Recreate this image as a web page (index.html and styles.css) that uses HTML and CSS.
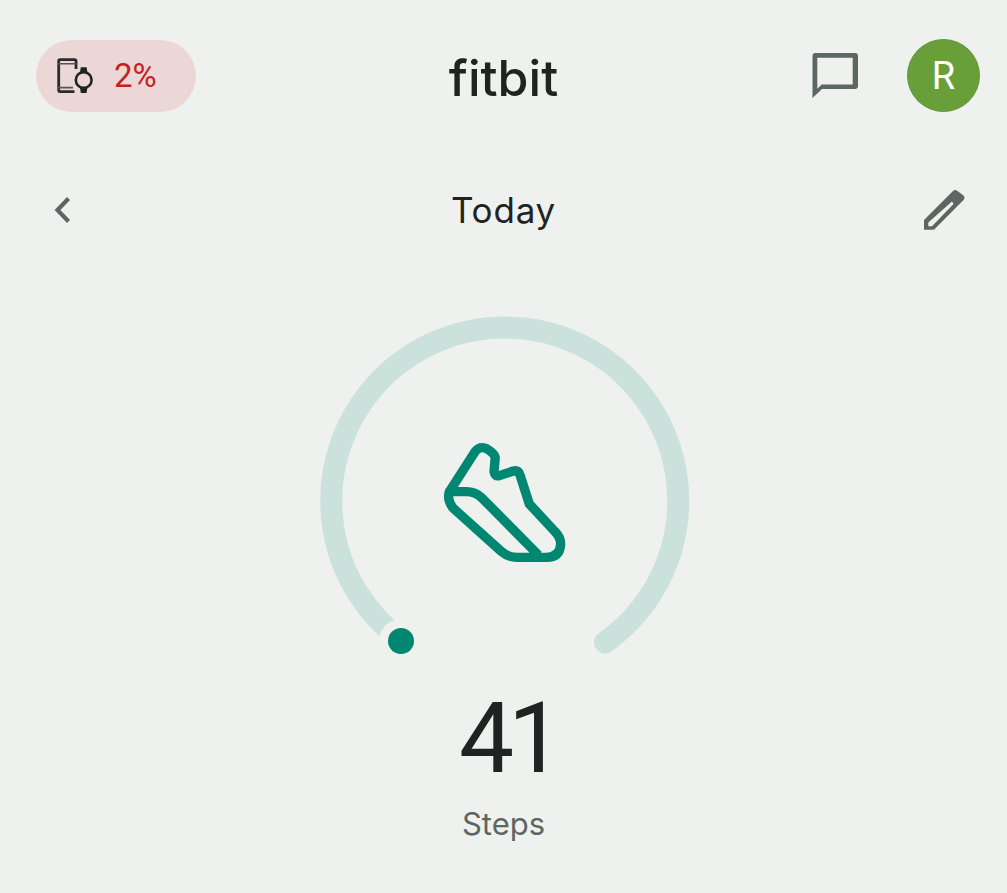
FILE: index.html
```html
<!DOCTYPE html>
<html lang="en">
<head>
<meta charset="utf-8">
<title>fitbit</title>
<link rel="stylesheet" href="styles.css">
</head>
<body>
<header class="topbar">
  <div class="battery">
    <svg class="battery-icon" viewBox="0 0 38 37" width="38" height="37" aria-hidden="true">
      <path d="M18.500 34.600H4Q2.700 34.600 2.700 33V4Q2.700 2.700 4 2.700H18.500Q20 2.700 20 4V12" fill="none" stroke="#2b2b2b" stroke-width="2.800"/>
      <path d="M2 6.800H20M2 30.600H17" fill="none" stroke="#555" stroke-width="1.600"/>
      <circle cx="27.700" cy="23" r="7.900" fill="none" stroke="#222" stroke-width="2.600"/>
      <path d="M24 15.500L24.800 10.300H30.600L31.400 15.500ZM24 30.500L24.800 36H30.600L31.400 30.500Z" fill="#222"/>
    </svg>
    <span class="battery-value">2%</span>
  </div>
  <div class="logo">fitbit</div>
  <div class="top-actions">
    <svg class="message-icon" viewBox="0 0 48 48" width="48" height="48" aria-hidden="true">
      <path fill-rule="evenodd" d="M3.500 1H43Q46 1 46 4V34Q46 37 43 37H10L.5 46V4Q.5 1 3.500 1ZM5.300 5.800V36.800L9.700 32.500H40.700V5.800Z" fill="#5c6663"/>
    </svg>
    <div class="avatar">R</div>
  </div>
</header>
<nav class="daybar">
  <svg class="back-icon" viewBox="0 0 24 32" width="24" height="32" aria-hidden="true">
    <path d="M17.500 4.500L6.500 16L17.500 27.500" fill="none" stroke="#5c6663" stroke-width="4.200"/>
  </svg>
  <h1 class="day">Today</h1>
  <svg class="edit-icon" viewBox="0 0 44 44" width="44" height="44" aria-hidden="true">
    <path fill-rule="evenodd" d="M2 32L31 3Q33 1 35.500 3L41.500 7.500Q43.500 10 41.500 12L12 41.700H2ZM6.300 34.500V38.300H10L31.500 16L30 13.500Z" fill="#5c6663"/>
  </svg>
</nav>
<main class="summary">
  <svg class="gauge" viewBox="314 312 380 350" width="380" height="350" role="img" aria-label="Steps progress">
    <path d="M404.500 642.500A173.500 173.500 0 1 1 605 642.500" fill="none" stroke="#cbe2dc" stroke-width="22" stroke-linecap="round"/>
    <circle cx="401" cy="641" r="22" fill="#eff1ee"/>
    <circle cx="401" cy="641" r="13" fill="#008771"/>
    <g transform="translate(420 420) scale(.33333)">
      <path d="M88 215L165 95Q185 70 215 97Q228 107 225 120L222 155Q224 170 238 167L280 153Q295 150 300 165L328 252L405 335Q422 352 422 372Q420 412 380 412H290Q265 412 245 395L100 265Q80 240 88 215H140Q165 215 185 233L355 405" fill="none" stroke="#008771" stroke-width="28" stroke-linejoin="round"/>
    </g>
  </svg>
  <div class="count">41</div>
  <div class="label">Steps</div>
</main>
</body>
</html>
```
FILE: styles.css
```css
* { box-sizing: border-box; }
html, body { height: 100%; }
body {
  margin: 0;
  background: #eff1ee;
  color: #202322;
  font-family: "Inter", "Liberation Sans", sans-serif;
  overflow: hidden;
}
svg { display: block; }
.topbar {
  display: grid;
  grid-template-columns: 1fr auto 1fr;
  align-items: center;
  padding: 39px 27px 0;
}
.battery {
  display: flex;
  align-items: center;
  gap: 20px;
  width: 160px;
  height: 72px;
  margin-left: 9px;
  padding-left: 20px;
  background: #ebd8d6;
  border-radius: 36px;
}
.battery-value {
  color: #c5221f;
  font-family: "Roboto", sans-serif;
  font-size: 33px;
}
.logo {
  height: 72px;
  font-size: 50px;
  font-weight: 450;
  line-height: 76px;
}
.top-actions {
  display: flex;
  align-items: center;
  justify-content: flex-end;
  gap: 47px;
}
.avatar {
  display: flex;
  align-items: center;
  justify-content: center;
  width: 73px;
  height: 73px;
  border: 1px solid #62953a;
  border-radius: 50%;
  background: #689f38;
  color: #fff;
  font-family: "Roboto", sans-serif;
  font-size: 38px;
}
.daybar {
  display: grid;
  grid-template-columns: 1fr auto 1fr;
  align-items: center;
  padding: 0 41px;
  margin-top: 76px;
  height: 44px;
}
.back-icon { margin-left: 10px; }
.edit-icon { justify-self: end; }
.day {
  margin: 0;
  font-size: 35px;
  font-weight: 400;
  letter-spacing: .8px;
}
.summary {
  display: flex;
  flex-direction: column;
  align-items: center;
  margin-top: 80px;
}
.count {
  margin-top: 27px;
  padding-left: 9px;
  font-family: "Roboto", sans-serif;
  font-weight: 400;
  font-size: 98px;
  line-height: 100px;
  letter-spacing: -6px;
}
.label {
  margin-top: 15px;
  font-size: 31px;
  line-height: 40px;
  color: #5c6663;
}
```
